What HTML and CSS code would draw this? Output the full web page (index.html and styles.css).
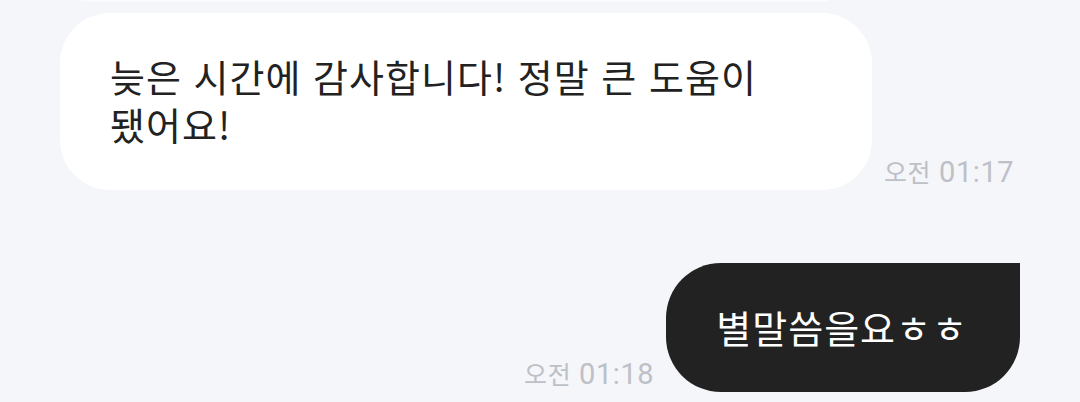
FILE: index.html
```html
<!DOCTYPE html>
<html lang="ko">
<head>
    <meta charset="UTF-8">
    <meta name="viewport" content="width=device-width, initial-scale=1.0">
    <title>채팅</title>
    <link rel="stylesheet" href="styles.css">
</head>
<body>
    <div class="chat">
        <!-- 위로 스크롤되어 잘린 이전 말풍선 -->
        <div class="row row-in row-cut">
            <div class="bubble bubble-in bubble-cut"></div>
        </div>

        <div class="row row-in">
            <div class="bubble bubble-in">늦은 시간에 감사합니다! 정말 큰 도움이 됐어요!</div>
            <span class="time"><span class="ampm">오전</span> 01:17</span>
        </div>

        <div class="row row-out">
            <span class="time"><span class="ampm">오전</span> 01:18</span>
            <div class="bubble bubble-out">별말씀을요ㅎㅎ</div>
        </div>
    </div>
</body>
</html>
```

FILE: styles.css
```css
body {
    margin: 0;
    background-color: #F5F6FA;
    font-family: Roboto, "Noto Sans CJK KR", sans-serif;
    color: #222222;
    overflow: hidden;
}

.chat {
    display: flex;
    flex-direction: column;
    padding: 0 60px;
}

.row {
    display: flex;
    align-items: flex-end;
    gap: 12px;
}

.row-in {
    justify-content: flex-start;
    margin-top: 11px;
}

.row-out {
    justify-content: flex-end;
    margin-top: 73px;
}

.row-cut {
    margin-top: -58px;
}

.bubble {
    font-family: "Noto Sans CJK KR", sans-serif;
    font-size: 38px;
    letter-spacing: 1px;
    line-height: 48px;
    word-break: keep-all;
    padding: 39px 50px 42px;
    border-radius: 50px;
    max-width: 812px;
    box-sizing: border-box;
}

.bubble-in {
    background-color: #FFFFFF;
}

.bubble-cut {
    width: 790px;
    height: 60px;
    padding: 0;
    background-color: #FAFBFD;
}

.bubble-out {
    background-color: #222222;
    color: #FFFFFF;
    padding: 40px 52px 41px 50px;
    border-radius: 55px 0 55px 55px;
}

.time {
    flex-shrink: 0;
    font-size: 29px;
    letter-spacing: 0.6px;
    line-height: 28px;
    color: #BDC0C6;
    margin-bottom: 4px;
    white-space: nowrap;
}

.ampm {
    font-family: "Noto Sans CJK KR", sans-serif;
    font-size: 25px;
    line-height: 28px;
}
```
